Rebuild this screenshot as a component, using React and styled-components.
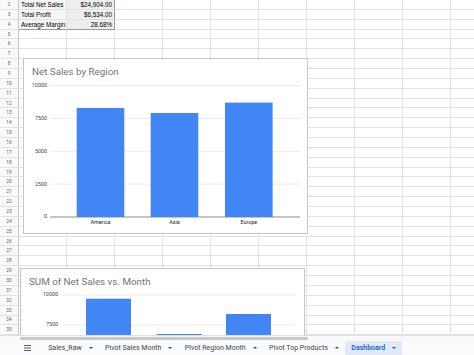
import React from "react";
import styled, { createGlobalStyle } from "styled-components";

const ROW_H = 9.87;
const COLS = ["A", "B", "C", "D", "E", "F", "G", "H", "I", "J"];
const ROWS = Array.from({ length: 34 }, (_, i) => i + 2);

const resumo = {
  2: ["Total Net Sales", "$24,904.00"],
  3: ["Total Profit", "$6,534.00"],
  4: ["Average Margin", "28.68%"],
};

const regioes = [
  { nome: "America", valor: 8290, x: 52.7 },
  { nome: "Asia", valor: 7910, x: 126.7 },
  { nome: "Europe", valor: 8700, x: 201 },
];

const meses = [
  { valor: 9690, x: 65 },
  { valor: 6750, x: 135.7 },
  { valor: 8417, x: 205 },
];

const abas = [
  "Sales_Raw",
  "Pivot Sales Month",
  "Pivot Region Month",
  "Pivot Top Products",
  "Dashboard",
];

const GlobalStyle = createGlobalStyle`
  * { box-sizing: border-box; }
  body {
    margin: 0;
    background: #ffffff;
    font-family: "Liberation Sans", Arial, sans-serif;
  }
`;

function GraficoRegiao() {
  // escala: 10000 em y=7.5, 0 em y=139
  const y = (v) => 139 - (v / 10000) * 131.5;
  return (
    <Plot width="282" height="155">
      {[0, 2500, 5000, 7500, 10000].map((v) => (
        <g key={v}>
          <line
            x1="26"
            x2="276"
            y1={y(v)}
            y2={y(v)}
            stroke={v === 0 ? "#6f6f6f" : "#dedede"}
            strokeWidth={v === 0 ? 0.8 : 0.6}
          />
          <EixoTexto x="23" y={y(v)} textAnchor="end" dominantBaseline="middle">
            {v}
          </EixoTexto>
        </g>
      ))}
      {regioes.map((r) => (
        <g key={r.nome}>
          <rect x={r.x} y={y(r.valor)} width="47.6" height={139 - y(r.valor)} fill="#4285f4" />
          <CategoriaTexto x={r.x + 23.8} y="144.5" textAnchor="middle" dominantBaseline="middle">
            {r.nome}
          </CategoriaTexto>
        </g>
      ))}
    </Plot>
  );
}

function GraficoMes() {
  // escala: 10000 em y=7, 12px por 1000
  const y = (v) => 7 + ((10000 - v) / 1000) * 12;
  return (
    <Plot width="282" height="60">
      {[7500, 10000].map((v) => (
        <g key={v}>
          <line x1="42" x2="274" y1={y(v)} y2={y(v)} stroke="#dedede" strokeWidth="0.6" />
          <EixoTexto x="37" y={y(v)} textAnchor="end" dominantBaseline="middle">
            {v}
          </EixoTexto>
        </g>
      ))}
      {meses.map((m) => (
        <rect key={m.x} x={m.x} y={y(m.valor)} width="45" height="60" fill="#4285f4" />
      ))}
    </Plot>
  );
}

function App() {
  return (
    <>
      <GlobalStyle />
      <Pagina>
        <AreaPlanilha>
          <Grade>
            {ROWS.map((linha) => (
              <React.Fragment key={linha}>
                <Cabecalho>{linha}</Cabecalho>
                {COLS.map((col, i) => {
                  const dado = resumo[linha];
                  const naTabela = dado && i < 2;
                  return (
                    <Celula
                      key={col}
                      $fundo={naTabela ? (i === 0 ? "#f6f6f6" : "#eeeeee") : "#ffffff"}
                      $alinha={i === 1 ? "flex-end" : "flex-start"}
                      $bordaDireita={naTabela && i === 1 ? "#9a9a9a" : "#e2e2e2"}
                      $bordaBaixo={linha === 4 && i < 2 ? "#9a9a9a" : "#e2e2e2"}
                    >
                      {naTabela ? dado[i] : null}
                    </Celula>
                  );
                })}
              </React.Fragment>
            ))}
          </Grade>

          <Cartao $esq={23} $topo={58} $altura={176}>
            <Titulo $recuo={8}>Net Sales by Region</Titulo>
            <GraficoRegiao />
          </Cartao>

          <Cartao $esq={20} $topo={268} $altura={90}>
            <Titulo $recuo={8}>SUM of Net Sales vs. Month</Titulo>
            <GraficoMes />
          </Cartao>
        </AreaPlanilha>

        <Rolagem>
          <Polegar />
        </Rolagem>

        <BarraAbas>
          <BotaoLista>
            <svg width="7" height="6" viewBox="0 0 7 6">
              <rect x="0" y="0" width="7" height="1" fill="#5f6368" />
              <rect x="0" y="2.5" width="7" height="1" fill="#5f6368" />
              <rect x="0" y="5" width="7" height="1" fill="#5f6368" />
            </svg>
          </BotaoLista>
          {abas.map((nome) => (
            <Aba key={nome} $ativa={nome === "Dashboard"}>
              {nome}
              <Seta $ativa={nome === "Dashboard"} />
            </Aba>
          ))}
        </BarraAbas>
      </Pagina>
    </>
  );
}

const Pagina = styled.div`
  width: 474px;
  height: 355px;
  overflow: hidden;
  display: flex;
  flex-direction: column;
  background: #ffffff;
`;

const AreaPlanilha = styled.div`
  position: relative;
  height: 335px;
  overflow: hidden;
  flex-shrink: 0;
`;

const Grade = styled.div`
  display: grid;
  grid-template-columns: 19px repeat(10, 48px);
  grid-auto-rows: ${ROW_H}px;
  width: 499px;
`;

const Cabecalho = styled.div`
  display: flex;
  align-items: center;
  justify-content: center;
  background: #f8f9fa;
  border-right: 1px solid #c4c7c5;
  border-bottom: 1px solid #e2e2e2;
  font-family: Roboto, "Liberation Sans", sans-serif;
  font-size: 4.8px;
  color: #5f6368;
`;

const Celula = styled.div`
  display: flex;
  align-items: center;
  justify-content: ${(props) => props.$alinha};
  padding: 0 2px;
  background: ${(props) => props.$fundo};
  border-right: 1px solid ${(props) => props.$bordaDireita};
  border-bottom: 1px solid ${(props) => props.$bordaBaixo};
  font-size: 6.3px;
  color: #000000;
  white-space: nowrap;
  overflow: hidden;
`;

const Cartao = styled.div`
  position: absolute;
  left: ${(props) => props.$esq}px;
  top: ${(props) => props.$topo}px;
  width: 285px;
  height: ${(props) => props.$altura}px;
  background: #ffffff;
  border: 1px solid #c6c6c6;
  display: flex;
  flex-direction: column;
`;

const Titulo = styled.div`
  padding: 7px 0 0 ${(props) => props.$recuo}px;
  height: 19px;
  font-family: Roboto, "Liberation Sans", sans-serif;
  font-size: 9.8px;
  line-height: 12px;
  color: #757575;
  white-space: nowrap;
`;

const Plot = styled.svg`
  display: block;
  flex-shrink: 0;
`;

const EixoTexto = styled.text`
  font-family: Roboto, "Liberation Sans", sans-serif;
  font-size: 5.4px;
  fill: #444444;
`;

const CategoriaTexto = styled.text`
  font-family: Roboto, "Liberation Sans", sans-serif;
  font-size: 5.4px;
  fill: #222222;
`;

const Rolagem = styled.div`
  height: 6px;
  flex-shrink: 0;
  background: #f8f9fa;
  padding: 1px 0 1px 20px;
  border-top: 1px solid #e0e0e0;
`;

const Polegar = styled.div`
  width: 288px;
  height: 3px;
  border-radius: 2px;
  background: #c8c8c8;
`;

const BarraAbas = styled.div`
  flex: 1;
  display: flex;
  align-items: stretch;
  background: #f9fbfd;
`;

const BotaoLista = styled.div`
  width: 42px;
  display: flex;
  align-items: center;
  padding-left: 24px;
`;

const Aba = styled.div`
  display: flex;
  align-items: center;
  gap: 7px;
  padding: 0 6.2px;
  background: ${(props) => (props.$ativa ? "#e1e9f7" : "transparent")};
  color: ${(props) => (props.$ativa ? "#0b57d0" : "#444746")};
  font-family: Roboto, "Open Sans", sans-serif;
  font-size: 7px;
  font-weight: ${(props) => (props.$ativa ? 500 : 400)};
  white-space: nowrap;
`;

const Seta = styled.span`
  width: 0;
  height: 0;
  border-left: 2px solid transparent;
  border-right: 2px solid transparent;
  border-top: 2px solid ${(props) => (props.$ativa ? "#0b57d0" : "#444746")};
`;

export default App;
